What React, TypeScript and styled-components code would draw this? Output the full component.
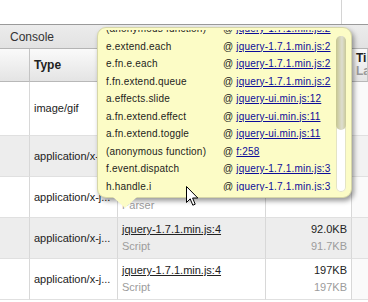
import * as React from 'react'
import styled, { createGlobalStyle } from 'styled-components'

const GlobalStyle = createGlobalStyle`
  html, body {
    margin: 0;
    padding: 0;
    background: #ffffff;
  }
`

const FONT = `'Liberation Sans', Arial, sans-serif`

const Page = styled.div`
  position: relative;
  width: 368px;
  height: 302px;
  overflow: hidden;
  background: #ffffff;
  font-family: ${FONT};
  font-size: 11px;
  color: #222;
`

const TopStrip = styled.div`
  height: 24px;
  display: flex;
  justify-content: flex-end;
`

const TopDivider = styled.div`
  width: 1px;
  margin-right: 26px;
  background: #d4d4d4;
`

const Toolbar = styled.div`
  height: 23px;
  display: flex;
  align-items: center;
  padding-left: 10px;
  border-top: 1px solid #9a9a9a;
  border-bottom: 1px solid #b4b4b4;
  background: linear-gradient(#ececec, #e2e2e2);
  font-size: 12px;
  color: #333;
`

const Grid = styled.div`
  display: grid;
  grid-template-columns: 30px 88px 148px 86px 1fr;
`

const HeadCell = styled.div`
  height: 32px;
  display: flex;
  flex-direction: column;
  justify-content: center;
  padding-left: 4px;
  border-right: 1px solid #c4c4c4;
  border-bottom: 1px solid #b8b8b8;
  background: linear-gradient(#fafafa, #e4e4e4);
  font-weight: bold;
  font-size: 12px;
  color: #222;
  line-height: 13px;
  white-space: nowrap;
  overflow: hidden;

  &:last-child {
    border-right: none;
  }
`

const SubHead = styled.span`
  font-weight: bold;
  color: #9a9a9a;
`

const Cell = styled.div<{ $alt?: boolean; $tall?: boolean; $right?: boolean }>`
  height: ${(p) => (p.$tall ? 53 : 40)}px;
  display: flex;
  flex-direction: column;
  justify-content: center;
  align-items: ${(p) => (p.$right ? 'flex-end' : 'flex-start')};
  padding: 0 4px;
  border-right: 1px solid #d8d8d8;
  border-bottom: 1px solid #e0e0e0;
  background: ${(p) => (p.$alt ? '#ededed' : '#ffffff')};
  line-height: 17px;
  white-space: nowrap;
  overflow: hidden;

  &:nth-child(5n) {
    border-right: none;
    background: ${(p) => (p.$alt ? '#f2f2f2' : '#fafafa')};
  }
`

const FileLink = styled.span`
  color: #222;
  text-decoration: underline;
`

const Muted = styled.span`
  color: #9c9c9c;
`

const Popup = styled.div`
  position: absolute;
  left: 97px;
  top: 27px;
  width: 255px;
  height: 171px;
  border-radius: 9px;
  background: #fcfcc6;
  border: 1px solid #d6d6a8;
  box-sizing: border-box;
  box-shadow: 2px 3px 5px rgba(0, 0, 0, 0.4);

  &::after {
    content: '';
    position: absolute;
    left: 15px;
    bottom: -11px;
    border-left: 12px solid transparent;
    border-right: 12px solid transparent;
    border-top: 11px solid #fcfcc6;
  }
`

const Clip = styled.div`
  position: absolute;
  left: 0;
  right: 14px;
  top: 2px;
  bottom: 6px;
  overflow: hidden;
`

const Frames = styled.div`
  margin-top: -10px;
  padding-left: 8px;
  display: grid;
  grid-template-columns: 117px 1fr;
  font-family: ${FONT};
  font-size: 10px;
  letter-spacing: 0.2px;
  line-height: 17.5px;
  color: #1c1c1c;
  white-space: nowrap;
`

const FrameLink = styled.span`
  color: #0c0c9a;
  text-decoration: underline;
`

const ScrollTrack = styled.div`
  position: absolute;
  right: 5px;
  top: 8px;
  bottom: 5px;
  width: 10px;
  border-radius: 5px;
  background: #ffffff;
  box-shadow: inset 0 0 0 1px #e4e4c4;
  display: flex;
  flex-direction: column;
`

const ScrollThumb = styled.div`
  height: 94px;
  border-radius: 5px;
  background: linear-gradient(90deg, #c6c690, #deded0 60%, #c8c898);
`

const Cursor = styled.svg`
  position: absolute;
  left: 186px;
  top: 186px;
`

const frames: [string, string][] = [
  ['(anonymous function)', 'jquery-1.7.1.min.js:2'],
  ['e.extend.each', 'jquery-1.7.1.min.js:2'],
  ['e.fn.e.each', 'jquery-1.7.1.min.js:2'],
  ['f.fn.extend.queue', 'jquery-1.7.1.min.js:2'],
  ['a.effects.slide', 'jquery-ui.min.js:12'],
  ['a.fn.extend.effect', 'jquery-ui.min.js:11'],
  ['a.fn.extend.toggle', 'jquery-ui.min.js:11'],
  ['(anonymous function)', 'f:258'],
  ['f.event.dispatch', 'jquery-1.7.1.min.js:3'],
  ['h.handle.i', 'jquery-1.7.1.min.js:3'],
]

interface Row {
  type: string
  file?: string
  kind: string
  size?: string
  transfer?: string
  tall?: boolean
}

const rows: Row[] = [
  { type: 'image/gif', kind: '', tall: true },
  { type: 'application/x-j...', kind: '' },
  { type: 'application/x-j...', kind: 'Parser' },
  { type: 'application/x-j...', file: 'jquery-1.7.1.min.js:4', kind: 'Script', size: '92.0KB', transfer: '91.7KB' },
  { type: 'application/x-j...', file: 'jquery-1.7.1.min.js:4', kind: 'Script', size: '197KB', transfer: '197KB' },
]

export default function App(): JSX.Element {
  return (
    <Page>
      <GlobalStyle />
      <TopStrip>
        <TopDivider />
      </TopStrip>
      <Toolbar>Console</Toolbar>
      <Grid>
        <HeadCell />
        <HeadCell>Type</HeadCell>
        <HeadCell>Initiator</HeadCell>
        <HeadCell>Size</HeadCell>
        <HeadCell>
          Time
          <SubHead>Latency</SubHead>
        </HeadCell>
        {rows.map((r, i) => {
          const alt = i % 2 === 1
          return (
            <React.Fragment key={i}>
              <Cell $alt={alt} $tall={r.tall} />
              <Cell $alt={alt} $tall={r.tall}>{r.type}</Cell>
              <Cell $alt={alt} $tall={r.tall}>
                {r.file ? <FileLink>{r.file}</FileLink> : <span>&nbsp;</span>}
                <Muted>{r.kind}</Muted>
              </Cell>
              <Cell $alt={alt} $tall={r.tall} $right>
                <span>{r.size}</span>
                <Muted>{r.transfer}</Muted>
              </Cell>
              <Cell $alt={alt} $tall={r.tall} />
            </React.Fragment>
          )
        })}
      </Grid>

      <Popup>
        <Clip>
          <Frames>
            {frames.map(([fn, src], i) => (
              <React.Fragment key={i}>
                <span>{fn}</span>
                <span>
                  @ <FrameLink>{src}</FrameLink>
                </span>
              </React.Fragment>
            ))}
          </Frames>
        </Clip>
        <ScrollTrack>
          <ScrollThumb />
        </ScrollTrack>
      </Popup>

      <Cursor width="13" height="21" viewBox="0 0 13 21">
        <path
          d="M0.5 0.5 L0.5 16.5 L4.2 12.8 L6.8 19.2 L9.2 18.2 L6.6 12 L11.8 12 Z"
          fill="#ffffff"
          stroke="#000000"
          strokeWidth="1"
          strokeLinejoin="miter"
        />
      </Cursor>
    </Page>
  )
}
